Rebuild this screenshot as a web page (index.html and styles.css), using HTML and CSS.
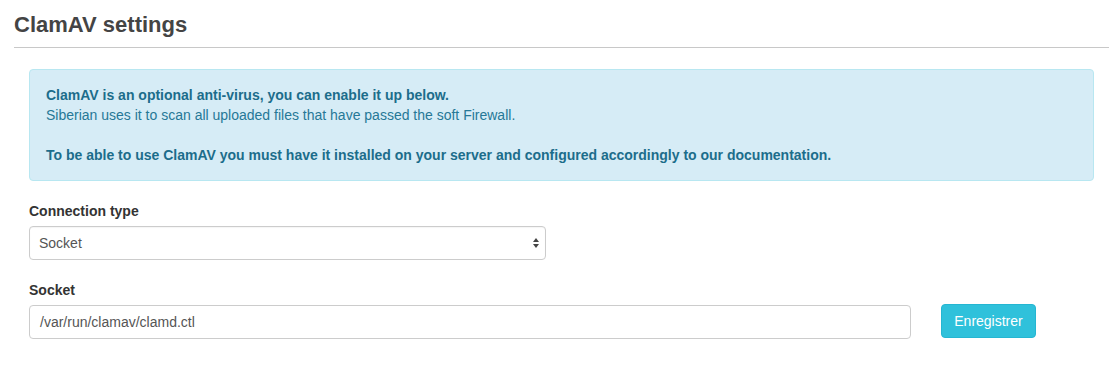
FILE: index.html
```html
<!DOCTYPE html>
<html>
<head>
<meta charset="utf-8">
<link rel="stylesheet" href="styles.css">
</head>
<body>
<div class="page">
  <h1 class="title">ClamAV settings</h1>
  <div class="content">
    <div class="alert">
      <strong>ClamAV is an optional anti-virus, you can enable it up below.</strong><br>
      Siberian uses it to scan all uploaded files that have passed the soft Firewall.<br>
      <br>
      <strong>To be able to use ClamAV you must have it installed on your server and configured accordingly to our documentation.</strong>
    </div>
    <div class="group">
      <label class="label">Connection type</label>
      <div class="select">
        <span>Socket</span>
        <svg class="arrows" width="8" height="12" viewBox="0 0 8 12"><path d="M4 1 L7 5 L1 5 Z" fill="#444"/><path d="M4 11 L7 7 L1 7 Z" fill="#444"/></svg>
      </div>
    </div>
    <div class="group">
      <label class="label">Socket</label>
      <div class="row">
        <div class="input">/var/run/clamav/clamd.ctl</div>
        <button class="btn">Enregistrer</button>
      </div>
    </div>
  </div>
</div>
</body>
</html>
```
FILE: styles.css
```css
html, body {
  margin: 0;
  padding: 0;
  background: #fff;
}
body {
  font-family: "Liberation Sans", Arial, sans-serif;
  font-size: 14px;
  color: #333;
}
.page {
  padding: 0 11px 0 14px;
}
.title {
  margin: 0;
  padding-top: 10px;
  height: 37px;
  font-size: 22px;
  line-height: 30px;
  font-weight: bold;
  color: #444;
  border-bottom: 1px solid #c8c8c8;
}
.content {
  padding: 21px 15px 0 15px;
}
.alert {
  background: #d6ecf6;
  border: 1px solid #b8e7f1;
  border-radius: 4px;
  color: #267897;
  padding: 15px 16px;
  line-height: 20px;
  font-size: 14px;
}
.alert strong {
  color: #1c6d8b;
}
.group {
  margin-top: 20px;
}
.label {
  display: block;
  font-weight: bold;
  font-size: 14px;
  line-height: 20px;
  color: #333;
  margin-bottom: 5px;
}
.select {
  box-sizing: border-box;
  width: 517px;
  height: 34px;
  border: 1px solid #ccc;
  border-radius: 4px;
  display: flex;
  align-items: center;
  justify-content: space-between;
  padding: 0 5px 0 9px;
  color: #555;
  font-size: 14px;
  box-shadow: inset 0 1px 1px rgba(0,0,0,0.04);
}
.row {
  display: flex;
  align-items: flex-start;
  gap: 30px;
}
.input {
  box-sizing: border-box;
  width: 882px;
  height: 34px;
  border: 1px solid #ccc;
  border-radius: 4px;
  display: flex;
  align-items: center;
  padding: 0 12px 0 10px;
  color: #555;
  font-size: 14px;
}
.btn {
  box-sizing: border-box;
  margin-top: -1px;
  height: 34px;
  width: 95px;
  background: #2fc1db;
  border: 1px solid #25b6d2;
  border-radius: 4px;
  color: #fff;
  font-family: "Liberation Sans", Arial, sans-serif;
  font-size: 14px;
  padding: 0;
}
```
